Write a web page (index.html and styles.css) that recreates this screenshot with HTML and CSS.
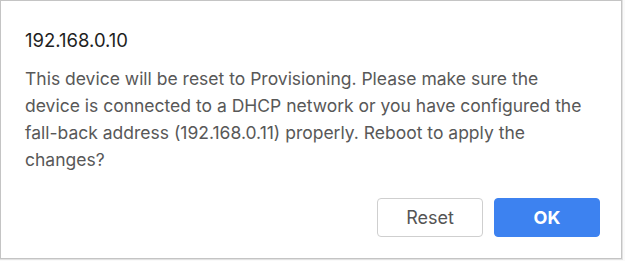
FILE: index.html
```html
<!DOCTYPE html>
<html>
<head>
<meta charset="utf-8">
<link rel="stylesheet" href="styles.css">
</head>
<body>
<div class="dialog">
  <div class="title">192.168.0.10</div>
  <p class="message">This device will be reset to Provisioning. Please make sure the device is connected to a DHCP network or you have configured the fall-back address (192.168.0.11) properly. Reboot to apply the changes?</p>
  <div class="actions">
    <button class="btn btn-secondary">Reset</button>
    <button class="btn btn-primary">OK</button>
  </div>
</div>
</body>
</html>
```
FILE: styles.css
```css
html, body {
  margin: 0;
  padding: 0;
  background: #fafafa;
}
body {
  width: 625px;
  height: 261px;
  font-family: Inter, "Liberation Sans", Arial, sans-serif;
}
.dialog {
  box-sizing: border-box;
  width: 622px;
  height: 259px;
  background: #fff;
  border: 1px solid #c4c4c4;
  box-shadow: 0 0 0 1px #e2e2e2;
  padding: 27px 21px 21px 24px;
  display: flex;
  flex-direction: column;
}
.title {
  font-size: 18.5px;
  color: #1e1e1e;
  line-height: 24px;
}
.message {
  margin: 13px 0 0 0;
  font-size: 17.5px;
  line-height: 27px;
  color: #585858;
  width: 565px;
}
.actions {
  margin-top: auto;
  display: flex;
  justify-content: flex-end;
  gap: 11px;
}
.btn {
  width: 106px;
  height: 39px;
  border-radius: 4px;
  font-family: Inter, "Liberation Sans", Arial, sans-serif;
  font-size: 18px;
  cursor: pointer;
}
.btn-secondary {
  background: #fff;
  border: 1px solid #cfcfcf;
  color: #555;
}
.btn-primary {
  background: #3d82f0;
  border: 1px solid #3d82f0;
  color: #fff;
  font-weight: bold;
}
```
